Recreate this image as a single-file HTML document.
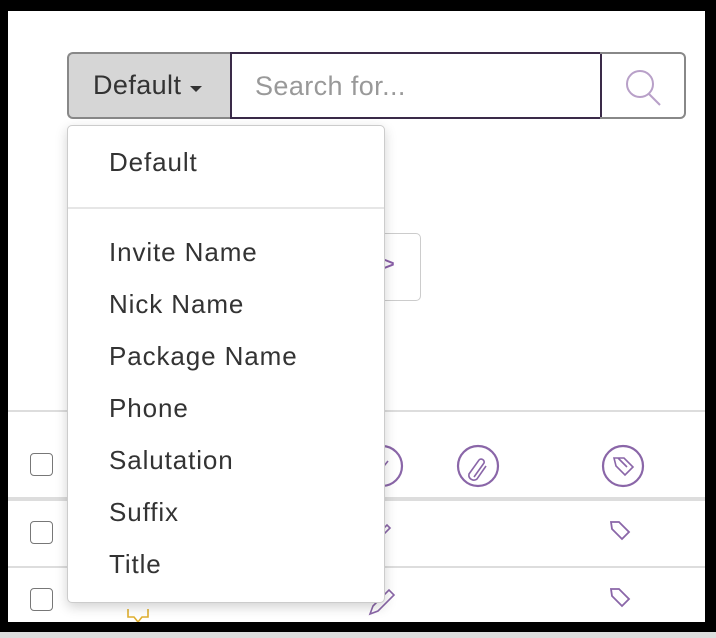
<!DOCTYPE html>
<html><head><style>
body{margin:0;width:716px;height:638px;background:#ddd;position:relative;overflow:hidden;font-family:"Liberation Sans",sans-serif}
.frame{position:absolute;left:0;top:0;width:716px;height:632px;background:#000}
.white{position:absolute;left:8px;top:11px;width:697px;height:611px;background:#fff;overflow:hidden}
.a{position:absolute}
.cb{position:absolute;left:22px;width:23px;height:23px;border:1.5px solid #777;border-radius:4px;box-sizing:border-box}
.item{position:absolute;left:41px;font-size:26px;color:#333;letter-spacing:0.9px;line-height:30px}
</style></head><body>
<div class="frame"></div>
<div class="white">
 <div class="a" style="left:59px;top:41px;width:164px;height:67px;background:#d6d6d6;border:2px solid #888;border-right:none;border-radius:6px 0 0 6px;box-sizing:border-box"></div>
 <div class="a" style="left:85px;top:59px;font-size:27px;color:#333;letter-spacing:0.4px;line-height:30px">Default</div>
 <div class="a" style="left:182px;top:75px;width:0;height:0;border-left:6px solid transparent;border-right:6px solid transparent;border-top:6px solid #333"></div>
 <div class="a" style="left:222px;top:41px;width:372px;height:67px;border:2px solid #3a2a48;box-sizing:border-box"></div>
 <div class="a" style="left:247px;top:60px;font-size:27px;color:#999;letter-spacing:0.4px;line-height:30px">Search for...</div>
 <div class="a" style="left:592px;top:41px;width:86px;height:67px;border:2px solid #888;border-left:none;border-radius:0 6px 6px 0;box-sizing:border-box"></div>
 <svg class="a" style="left:614px;top:56px" width="44" height="44" viewBox="0 0 44 44"><circle cx="18" cy="17" r="13" fill="none" stroke="#b8a0c8" stroke-width="2"/><line x1="27" y1="27" x2="38" y2="38" stroke="#b8a0c8" stroke-width="2"/></svg>
 <div class="a" style="left:300px;top:222px;width:111px;height:66px;border:1.5px solid #ccc;border-radius:5px"></div>
 <div class="a" style="left:376px;top:243px;color:#8a5fa8;font-size:18px;font-weight:bold">&gt;</div>
 <div class="a" style="left:0;top:399px;width:697px;height:2px;background:#ddd"></div>
 <div class="a" style="left:0;top:486px;width:697px;height:4px;background:#ddd"></div>
 <div class="a" style="left:0;top:555px;width:697px;height:2px;background:#ddd"></div>
 <div class="cb" style="top:442px"></div>
 <div class="cb" style="top:510px"></div>
 <div class="cb" style="top:577px"></div>
 <svg class="a" style="left:0;top:400px" width="697" height="211">
  <g fill="none" stroke="#8a66a8" stroke-width="2.2">
   <circle cx="374" cy="55" r="20"/>
   <circle cx="470" cy="55" r="20"/>
   <circle cx="615" cy="55" r="20"/>
   <path d="M466 66 l10 -14 a3 3 0 0 0 -5 -3 l-10 14 a5 5 0 0 0 8 5 l9 -13" stroke-width="1.6"/>
   <path d="M606 47 h10 l9 9 -8 8 -9 -9 z M610 47 l9 9" stroke-width="1.6"/>
   <path d="M372 60 l8 -10" stroke-width="1.6"/>
   <path d="M370 123 l9 -9 3 3 -9 9 z" stroke-width="1.6"/>
   <path d="M603 111 h8 l10 10 -7 7 -10 -10 z" stroke-width="1.8"/>
   <path d="M362 203 l3 -8 16 -16 5 5 -16 16 z" stroke-width="1.6"/>
   <path d="M603 178 h8 l10 10 -7 7 -10 -10 z" stroke-width="1.8"/>
  </g>
  <path d="M120 198 v8 h6 l4 5 4 -5 h6 v-8" fill="none" stroke="#e0b030" stroke-width="1.6"/>
 </svg>
 <div class="a" style="left:59px;top:114px;width:316px;height:476px;background:#fff;border:1px solid #ccc;border-radius:5px;box-shadow:0 4px 12px rgba(0,0,0,0.18)">
  <div class="item" style="top:21px">Default</div>
  <div class="a" style="left:0;top:81px;width:316px;height:2px;background:#e6e6e6"></div>
  <div class="item" style="top:111px">Invite Name</div>
  <div class="item" style="top:163px">Nick Name</div>
  <div class="item" style="top:215px">Package Name</div>
  <div class="item" style="top:267px">Phone</div>
  <div class="item" style="top:319px">Salutation</div>
  <div class="item" style="top:371px">Suffix</div>
  <div class="item" style="top:423px">Title</div>
 </div>
</div>
</body></html>
